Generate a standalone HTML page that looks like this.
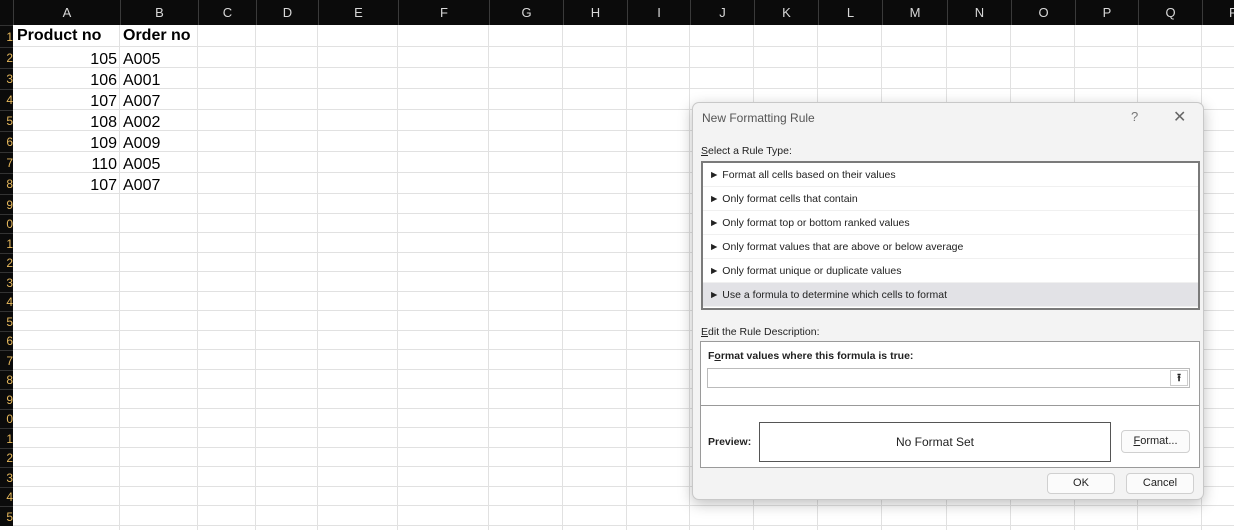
<!DOCTYPE html>
<html><head><meta charset="utf-8"><style>
*{margin:0;padding:0;box-sizing:border-box}
body{width:1234px;height:530px;overflow:hidden;background:#fff;font-family:"Liberation Sans",sans-serif;position:relative}
.hdr{position:absolute;left:0;top:0;width:1234px;height:25px;background:#0b0b0b}
.col{position:absolute;top:0;height:25px;border-left:1px solid #3a3a3a;color:#d8d8d8;font-size:13px;text-align:center;line-height:25px}
.rh{position:absolute;left:0;width:13px;background:#0b0b0b;color:#e6b85c;font-size:12px;text-align:right;border-top:1px solid #333}
.vl{position:absolute;top:25px;bottom:0;width:1px;background:#e1e1e1}
.hl{position:absolute;left:13px;right:0;height:1px;background:#e1e1e1}
.c{position:absolute;font-size:16px;color:#000}
.dlg{position:absolute;left:692px;top:102px;width:512px;height:398px;background:#f3f3f3;border:1px solid #c8c8c8;border-radius:7px;box-shadow:0 4px 14px rgba(0,0,0,.25);font-size:11px;color:#222}
.t{position:absolute}
.list{position:absolute;left:8px;top:58px;width:499px;height:149px;border:2px solid #7a7a7a;background:#fff}
.it{height:24px;line-height:24px;padding-left:6px;border-bottom:1px solid #f0f0f0;font-size:10.5px}
.btn{position:absolute;background:#fbfbfb;border:1px solid #d0d0d0;border-radius:4px;text-align:center;font-size:11px}
</style></head><body>
<div class="hdr"></div>
<div class="col" style="left:13px;width:107px">A</div>
<div class="col" style="left:120px;width:78px">B</div>
<div class="col" style="left:198px;width:58px">C</div>
<div class="col" style="left:256px;width:62px">D</div>
<div class="col" style="left:318px;width:80px">E</div>
<div class="col" style="left:398px;width:91px">F</div>
<div class="col" style="left:489px;width:74px">G</div>
<div class="col" style="left:563px;width:64px">H</div>
<div class="col" style="left:627px;width:63px">I</div>
<div class="col" style="left:690px;width:64px">J</div>
<div class="col" style="left:754px;width:64px">K</div>
<div class="col" style="left:818px;width:64px">L</div>
<div class="col" style="left:882px;width:65px">M</div>
<div class="col" style="left:947px;width:64px">N</div>
<div class="col" style="left:1011px;width:64px">O</div>
<div class="col" style="left:1075px;width:63px">P</div>
<div class="col" style="left:1138px;width:64px">Q</div>
<div class="col" style="left:1202px;width:64px;text-align:left;padding-left:26px">R</div>
<div id="g"></div>
<script>
var xs=[120,198,256,318,398,489,563,627,690,754,818,882,947,1011,1075,1138,1202],h='';
xs.forEach(function(x){h+='<div class="vl" style="left:'+(x-1)+'px"></div>'});
var ys=[25,47];for(var i=0;i<6;i++)ys.push(ys[ys.length-1]+21);ys.push(194);
for(var i=0;i<17;i++)ys.push(194+Math.round((i+1)*19.5));
for(var i=0;i<25;i++){var y=ys[i],hh=ys[i+1]-ys[i];h+='<div class="hl" style="top:'+(ys[i+1]-1)+'px"></div><div class="rh" style="top:'+y+'px;height:'+hh+'px;line-height:'+hh+'px">'+((i+1)%10)+'</div>';}
document.getElementById('g').innerHTML=h;
</script>
<div class="c" style="left:17px;top:27px;font-weight:bold">Product no</div>
<div class="c" style="left:123px;top:27px;font-weight:bold">Order no</div>
<div class="c" style="left:20px;top:49px;width:97px;text-align:right;line-height:21px">105<br>106<br>107<br>108<br>109<br>110<br>107</div>
<div class="c" style="left:123px;top:49px;line-height:21px">A005<br>A001<br>A007<br>A002<br>A009<br>A005<br>A007</div>

<div class="dlg">
<div class="t" style="left:9px;top:8px;font-size:12px;color:#555">New Formatting Rule</div>
<div class="t" style="left:438px;top:6px;font-size:13px;color:#777">?</div>
<div class="t" style="left:480px;top:4px;font-size:16px;color:#666">✕</div>
<div class="t" style="left:8px;top:42px;font-size:10.5px"><u>S</u>elect a Rule Type:</div>
<div class="list">
<div class="it">► Format all cells based on their values</div>
<div class="it">► Only format cells that contain</div>
<div class="it">► Only format top or bottom ranked values</div>
<div class="it">► Only format values that are above or below average</div>
<div class="it">► Only format unique or duplicate values</div>
<div class="it" style="background:#e2e2e6">► Use a formula to determine which cells to format</div>
</div>
<div class="t" style="left:8px;top:223px;font-size:10.5px"><u>E</u>dit the Rule Description:</div>
<div class="t" style="left:7px;top:238px;width:500px;height:127px;border:1px solid #9a9a9a;background:#fff">
 <div class="t" style="left:7px;top:8px;font-weight:bold;font-size:10.5px">F<u>o</u>rmat values where this formula is true:</div>
 <div class="t" style="left:6px;top:26px;width:483px;height:20px;border:1px solid #bbb"><div class="t" style="right:1px;top:1px;width:18px;height:16px;border:1px solid #ccc;text-align:center;font-weight:bold;font-size:11px;line-height:15px">⭱</div></div>
 <div class="t" style="left:0;top:63px;width:498px;height:1px;background:#999"></div>
 <div class="t" style="left:7px;top:94px;font-weight:bold;font-size:10.5px">Preview:</div>
 <div class="t" style="left:58px;top:80px;width:352px;height:40px;border:1px solid #555;text-align:center;line-height:38px;font-size:12px;color:#222">No Format Set</div>
 <div class="btn" style="left:420px;top:88px;width:69px;height:23px;line-height:21px"><u>F</u>ormat...</div>
</div>
<div class="btn" style="left:354px;top:370px;width:68px;height:21px;line-height:19px">OK</div>
<div class="btn" style="left:433px;top:370px;width:68px;height:21px;line-height:19px">Cancel</div>
</div>
</body></html>
